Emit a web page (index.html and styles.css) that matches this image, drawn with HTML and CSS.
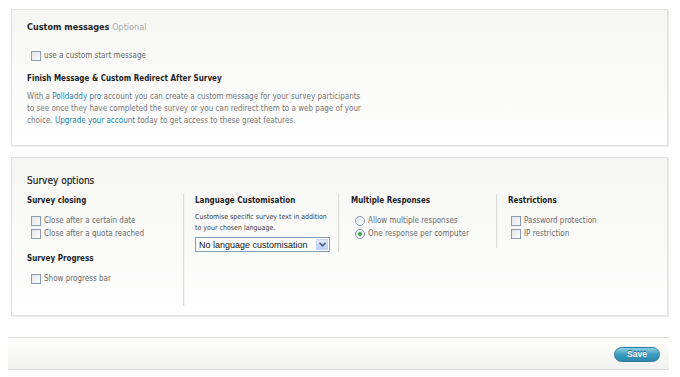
FILE: index.html
```html
<!DOCTYPE html>
<html>
<head>
<meta charset="utf-8">
<link rel="stylesheet" href="styles.css">
</head>
<body>
<div class="page">
  <section class="panel panel-messages">
    <h2 class="panel-title">Custom messages <span class="optional">Optional</span></h2>
    <label class="check-row start-msg"><span class="cb"></span>use a custom start message</label>
    <h3 class="sub-title">Finish Message &amp; Custom Redirect After Survey</h3>
    <p class="info">With a <a href="#">Polldaddy pro</a> account you can create a custom message for your survey participants<br>to see once they have completed the survey or you can redirect them to a web page of your<br>choice. <a href="#">Upgrade your account</a> today to get access to these great features.</p>
  </section>

  <section class="panel panel-options">
    <h2 class="options-title">Survey options</h2>
    <div class="columns">
      <div class="col col-1">
        <h3 class="col-title">Survey closing</h3>
        <label class="check-row"><span class="cb"></span>Close after a certain date</label>
        <label class="check-row"><span class="cb"></span>Close after a quota reached</label>
        <h3 class="col-title progress-title">Survey Progress</h3>
        <label class="check-row"><span class="cb"></span>Show progress bar</label>
      </div>
      <div class="col col-2">
        <h3 class="col-title lang-title">Language Customisation</h3>
        <p class="lang-desc">Customise specific survey text in addition<br>to your chosen language.</p>
        <div class="select"><span class="select-text">No language customisation</span><span class="select-btn"><svg width="7" height="5" viewBox="0 0 7 5"><path d="M0.5 0.8 L3.5 3.8 L6.5 0.8" fill="none" stroke="#4d6185" stroke-width="1.6"/></svg></span></div>
      </div>
      <div class="col col-3">
        <h3 class="col-title">Multiple Responses</h3>
        <label class="check-row"><span class="rb"></span>Allow multiple responses</label>
        <label class="check-row"><span class="rb on"></span>One response per computer</label>
      </div>
      <div class="col col-4">
        <h3 class="col-title">Restrictions</h3>
        <label class="check-row"><span class="cb"></span>Password protection</label>
        <label class="check-row"><span class="cb"></span>IP restriction</label>
      </div>
    </div>
  </section>

  <div class="footer-bar">
    <button class="save-btn">Save</button>
  </div>
</div>
</body>
</html>
```

FILE: styles.css
```css
* { box-sizing: border-box; }
html, body { margin: 0; padding: 0; background: #fff; }
body {
  font-family: "DejaVu Sans Condensed", "DejaVu Sans", sans-serif;
  font-size: 8px;
  color: #6f6f6f;
}
.page { width: 680px; padding-top: 9px; }

.panel {
  margin: 0 12px 0 11px;
  border: 1px solid #e2e2e0;
  box-shadow: 1px 1px 0 #ececea;
  background: linear-gradient(#f6f6f4, #fefefe);
  padding-left: 15px;
}
.panel-messages { height: 137px; padding-top: 10px; }
.panel-options { height: 159px; margin-top: 11px; padding-top: 15px; }

.panel-title {
  margin: 0;
  font-size: 9px;
  line-height: 14px;
  font-weight: bold;
  color: #1e1e1e;
}
.optional { font-weight: normal; color: #a8a8a8; }

.check-row {
  display: flex;
  align-items: center;
  height: 13px;
  line-height: 13px;
  font-size: 8px;
  color: #6a6a6a;
  padding-left: 4px;
}
.start-msg { margin-top: 15px; }

.cb {
  width: 10px; height: 10px;
  border: 1px solid #8a9cb4;
  background: linear-gradient(135deg, #e4e6e8, #fbfbfb);
  margin-right: 3px;
  flex: none;
}
.rb {
  width: 10px; height: 10px;
  border: 1px solid #8a9cb4;
  border-radius: 50%;
  background: linear-gradient(135deg, #e4e6e8, #fbfbfb);
  margin-right: 3px;
  flex: none;
  display: flex; align-items: center; justify-content: center;
}
.rb.on::after {
  content: "";
  width: 4px; height: 4px; border-radius: 50%;
  background: #3aa34a;
}

.sub-title {
  margin: 10px 0 0;
  font-size: 8px;
  line-height: 14px;
  font-weight: bold;
  color: #1e1e1e;
}
.info {
  margin: 5px 0 0;
  line-height: 12px;
  font-size: 8px;
  color: #777;
}
.info a { color: #2a7fa8; text-decoration: none; }

.options-title {
  margin: 0;
  font-size: 10px;
  line-height: 16px;
  font-weight: normal;
  color: #1e1e1e;
  -webkit-text-stroke: 0.2px #1e1e1e;
}
.columns { display: flex; align-items: flex-start; margin-top: 5px; }
.col { border-right: 1px solid #dcdcda; box-shadow: 1px 0 0 #f4f4f2; }
.col-1 { width: 157px; height: 112px; }
.col-2 { width: 155px; height: 58px; padding-left: 11px; }
.col-3 { width: 158px; height: 54px; padding-left: 12px; }
.col-4 { border-right: none; box-shadow: none; padding-left: 11px; }

.col-title {
  margin: 0 0 6px;
  font-size: 8px;
  line-height: 14px;
  font-weight: bold;
  color: #1e1e1e;
}
.lang-title { margin-bottom: 4px; }
.progress-title { margin-top: 12px; margin-bottom: 6px; }
.col-4 .check-row { padding-left: 3px; }

.lang-desc {
  margin: 0;
  font-size: 7px;
  line-height: 11px;
  color: #3a3a3a;
}
.select {
  margin-top: 3px;
  width: 135px; height: 15px;
  border: 1px solid #7f9db9;
  background: #fff;
  display: flex; align-items: center;
  padding: 1px;
}
.select-text {
  flex: 1;
  font-family: "Liberation Sans", Arial, sans-serif;
  font-size: 9px;
  color: #111;
  padding-left: 2px;
}
.select-btn {
  width: 12px; height: 11px;
  background: linear-gradient(#dfe8fb, #b9cdf6);
  border: 1px solid #c3d3f5;
  display: flex; align-items: center; justify-content: center;
}

.footer-bar {
  margin: 21px 11px 0 8px;
  height: 33px;
  border-top: 1px solid #dcdcda;
  border-bottom: 1px solid #dcdcda;
  background: linear-gradient(#ffffff, #f1f1ef);
  display: flex; align-items: center; justify-content: flex-end;
  padding-right: 9px;
}
.save-btn {
  width: 46px; height: 15px;
  border: 1px solid #2f7c9c;
  border-radius: 8px;
  background: linear-gradient(#8fd0e6, #3c9cc0 50%, #2a86ad);
  color: #fff;
  font-family: "Liberation Sans", Arial, sans-serif;
  font-weight: bold;
  font-size: 8.5px;
  text-shadow: 0 -1px 0 #1e6a8a;
  padding: 0;
  margin-top: 1px;
}
```
